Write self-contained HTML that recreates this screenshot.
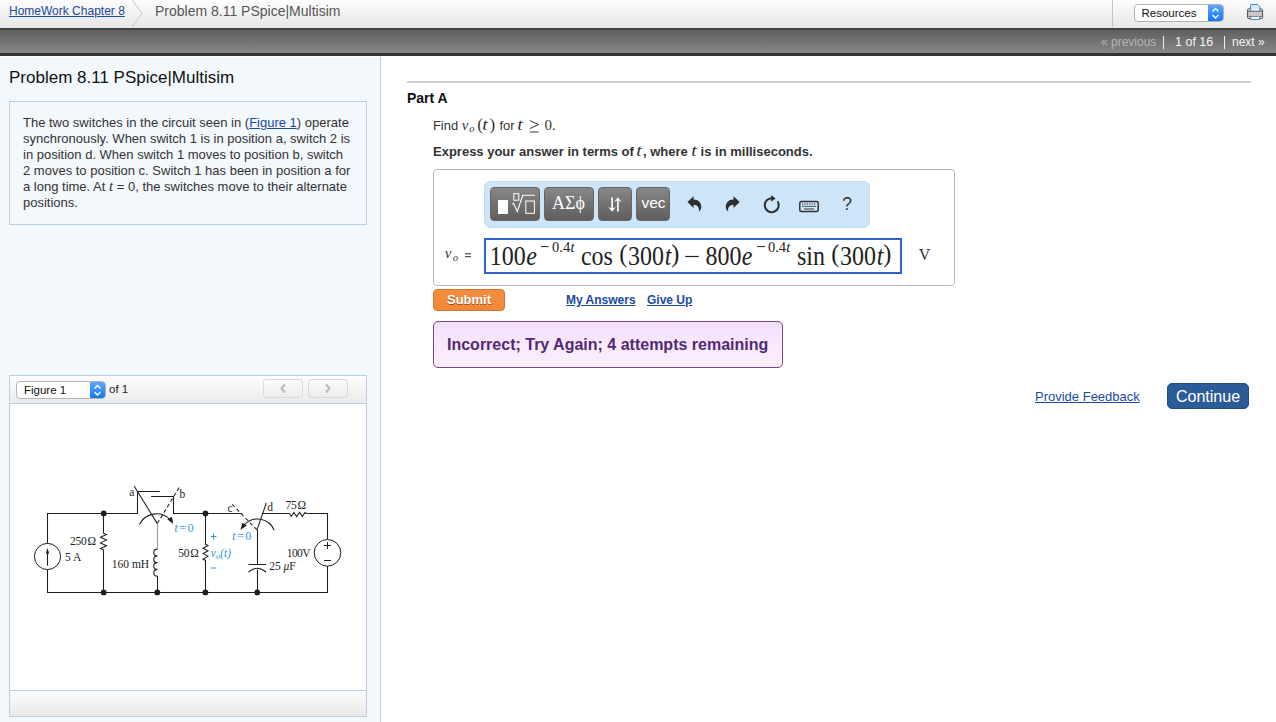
<!DOCTYPE html>
<html><head><meta charset="utf-8">
<style>
*{box-sizing:border-box;margin:0;padding:0}
html,body{width:1276px;height:722px;overflow:hidden;background:#fff;font-family:"Liberation Sans",sans-serif;color:#222;position:relative}
.abs{position:absolute;white-space:nowrap}
#top{left:0;top:0;width:1276px;height:28px;background:linear-gradient(#fdfdfd,#e6e6e6)}
#bar{left:0;top:28px;width:1276px;height:28px;background:linear-gradient(#5f5f5f,#888);border-top:2px solid #424242;border-bottom:3px solid #333}
#left{left:0;top:56px;width:381px;height:666px;background:#f3f8fc;border-right:1px solid #bccfe0;border-top:1px solid #fff}
a{color:#1b4aa0}
.m{font-family:"Liberation Serif",serif}
.mi{font-family:"Liberation Serif",serif;font-style:italic}
.btn{position:absolute;top:187px;height:34px;border-radius:4px;background:linear-gradient(#878787,#5e5e5e);border:1px solid #666;color:#fff}
.sel{position:absolute;border:1px solid #b4b4b4;border-radius:4px;background:#fff;overflow:hidden}
.sel .blu{position:absolute;right:0;top:0;bottom:0;background:linear-gradient(#5aa7fb,#1779f3)}
.nb{position:absolute;top:379px;width:40px;height:19px;border:1px solid #dadada;border-radius:3px;background:linear-gradient(#fbfbfb,#ececec)}
</style></head><body>
<div id="top" class="abs"></div>
<div id="bar" class="abs"></div>
<div id="left" class="abs"></div>

<!-- breadcrumb -->
<div class="abs" style="left:9px;top:4px;font-size:12px"><a href="#">HomeWork Chapter 8</a></div>
<svg class="abs" style="left:130px;top:0" width="16" height="28"><path d="M2 0 L12 13.5 L2 27" fill="none" stroke="#c8c8c8" stroke-width="1"/></svg>
<div class="abs" style="left:155px;top:3px;font-size:14px;color:#555">Problem 8.11 PSpice|Multisim</div>
<div class="abs" style="left:1112px;top:0;width:1px;height:27px;background:#c4c4c4"></div>
<div class="sel" style="left:1134px;top:4px;width:90px;height:18px">
  <div class="abs" style="left:6.5px;top:2px;font-size:11.5px;color:#111">Resources</div>
  <div class="blu" style="width:15px"><svg width="15" height="16" style="position:absolute;left:0;top:0"><path d="M4.5 6.5 L7.5 3.5 L10.5 6.5 M4.5 10 L7.5 13 L10.5 10" fill="none" stroke="#fff" stroke-width="1.4"/></svg></div>
</div>
<svg class="abs" style="left:1240px;top:0" width="30" height="26" viewBox="1240 0 30 26">
  <defs><linearGradient id="pg" x1="0" y1="0" x2="1" y2="1"><stop offset="0" stop-color="#c6dcf3"/><stop offset="1" stop-color="#eef5fc"/></linearGradient>
  <linearGradient id="pb" x1="0" y1="0" x2="0" y2="1"><stop offset="0" stop-color="#f4f4f4"/><stop offset="0.5" stop-color="#c4c4c4"/><stop offset="1" stop-color="#e8e8e8"/></linearGradient></defs>
  <path d="M1247.6 11 Q1247.1 9 1249 8.8 H1261.2 Q1263 9 1262.6 11 V17.5 Q1262.6 18.6 1261.4 18.6 H1248.8 Q1247.6 18.6 1247.6 17.5z" fill="url(#pb)" stroke="#3a3a3a" stroke-width="0.9"/>
  <path d="M1250.6 11.2 V5.4 Q1250.6 4.4 1251.6 4.4 H1257.6 L1259.8 6.6 V11.2" fill="url(#pg)" stroke="#3b86cf" stroke-width="1"/>
  <path d="M1248 11.3 H1262.3 M1248.5 16.4 H1261.8" stroke="#555" stroke-width="0.9" fill="none"/>
  <path d="M1250.6 16.8 V19.4 H1259.8 V16.8" fill="#f4f8fc" stroke="#3b86cf" stroke-width="1"/>
</svg>

<!-- dark bar nav -->
<div class="abs" style="left:1101px;top:35px;font-size:12px;color:#b4b4b4">« previous</div>
<div class="abs" style="left:1163px;top:36px;width:1px;height:13px;background:#eee"></div>
<div class="abs" style="left:1175px;top:35px;font-size:12.5px;color:#f4f4f4">1 of 16</div>
<div class="abs" style="left:1224px;top:36px;width:1px;height:13px;background:#eee"></div>
<div class="abs" style="left:1232px;top:35px;font-size:12px;color:#f4f4f4">next »</div>

<!-- left panel -->
<div class="abs" style="left:9px;top:68px;font-size:17px;color:#111">Problem 8.11 PSpice|Multisim</div>
<div class="abs" style="left:9px;top:101px;width:358px;height:124px;border:1px solid #bccfe0"></div>
<div class="abs" style="left:23px;top:115px;width:328px;font-size:13px;line-height:16px;color:#333;white-space:normal">The two switches in the circuit seen in (<a href="#">Figure 1</a>) operate synchronously. When switch 1 is in position a, switch 2 is in position d. When switch 1 moves to position b, switch 2 moves to position c. Switch 1 has been in position a for a long time. At <span class="mi" style="font-size:15px;line-height:0">t</span> = 0, the switches move to their alternate positions.</div>

<!-- figure panel -->
<div class="abs" style="left:9px;top:375px;width:358px;height:342px;border:1px solid #bccfe0;background:#fff"></div>
<div class="abs" style="left:10px;top:376px;width:356px;height:28px;background:linear-gradient(#fdfdfd,#ebebeb);border-bottom:1px solid #bccfe0"></div>
<div class="abs" style="left:10px;top:690px;width:356px;height:26px;background:linear-gradient(#fdfdfd,#e8e8e8);border-top:1px solid #bccfe0"></div>
<div class="sel" style="left:16px;top:381px;width:90px;height:18px">
  <div class="abs" style="left:7px;top:2px;font-size:11.5px;color:#111">Figure 1</div>
  <div class="blu" style="width:15px"><svg width="15" height="16" style="position:absolute;left:0;top:0"><path d="M4.5 6.5 L7.5 3.5 L10.5 6.5 M4.5 10 L7.5 13 L10.5 10" fill="none" stroke="#fff" stroke-width="1.4"/></svg></div>
</div>
<div class="abs" style="left:109px;top:383px;font-size:11.5px;color:#222">of 1</div>
<div class="nb" style="left:263px"><svg width="38" height="17" style="position:absolute;left:0;top:0"><path d="M21 4.5 L17.5 8.5 L21 12.5" fill="none" stroke="#bdbdbd" stroke-width="2.3"/></svg></div>
<div class="nb" style="left:308px"><svg width="38" height="17" style="position:absolute;left:0;top:0"><path d="M17 4.5 L20.5 8.5 L17 12.5" fill="none" stroke="#bdbdbd" stroke-width="2.3"/></svg></div>

<!-- CIRCUIT -->
<svg class="abs" style="left:10px;top:404px" width="356" height="286" viewBox="10 404 356 286"><g fill="none" stroke="#1e1e1e" stroke-width="1.05">
 <path d="M47.5 543.4 V513.5 H137.5 V491.5 H159.7"/>
 <path d="M47.5 569.6 V592.5 H327.5 V566.1"/>
 <path d="M151.1 496.5 H173.5 V513.5 H242.2"/>
 <path d="M262 513.5 H289.7"/>
 <path d="M306.5 513.5 H327.5 V539.5"/>
 <path d="M103.5 513.5 V533.2 l3 1.38 l-6 2.77 l6 2.77 l-6 2.77 l6 2.77 l-6 2.77 l3 1.38 V592.5"/>
 <path d="M205.5 513.5 V544.1 l2.5 1.36 l-5 2.72 l5 2.72 l-5 2.72 l5 2.72 l-5 2.72 l2.5 1.36 V592.5"/>
 <path d="M289.7 513.5 l1.4 3 l2.8 -4 l2.8 4 l2.8 -4 l2.8 4 l2.8 -4 l1.4 1"/>
 <path d="M47.5 565.7 V551"/>
 <path d="M157.5 576.1 V592.5"/>
 <path d="M157.5 549.1 c-5 0 -5 6.75 0 6.75 c-5 0 -5 6.75 0 6.75 c-5 0 -5 6.75 0 6.75 c-5 0 -5 6.75 0 6.75"/>
 <path d="M134.1 486 L157.3 523.6"/>
 <path d="M157.3 523.6 L179.4 487" stroke-dasharray="3.8 2.6"/>
 <path d="M139.5 524.4 A19 19 0 0 1 170 519.5"/>
 <path d="M257.5 529.9 V564.5 M248.5 564.5 H266 M257.5 569.5 V592.5"/>
 <path d="M248.5 572 Q257.3 564.5 266 572"/>
 <path d="M257 529.9 L266.3 503"/>
 <path d="M257 529.9 L230.8 503" stroke-dasharray="3.8 2.6"/>
 <path d="M274.2 530.4 A18 18 0 0 0 244 525"/>
 <path d="M324 545.5 h7 M327.5 542 v7 M324 560.5 h7" stroke-width="1"/>
</g>
<g fill="none" stroke="#1e1e1e" stroke-width="1">
 <circle cx="47.5" cy="556.5" r="13.1"/>
 <circle cx="327.5" cy="552.8" r="13.3"/>
</g>
<path d="M157.5 523.6 V549.1" stroke="#a0a0a0" stroke-width="1.2" fill="none"/>
<g fill="#1e1e1e">
 <circle cx="103.7" cy="513.4" r="2.9"/><circle cx="103.7" cy="592.4" r="2.9"/>
 <circle cx="205.4" cy="513.4" r="2.9"/><circle cx="205.4" cy="592.4" r="2.9"/>
 <circle cx="157.3" cy="592.4" r="2.9"/><circle cx="257.2" cy="592.4" r="2.9"/>
 <path d="M47.5 547.8 l-1.6 6 h3.2z"/>
 <path d="M173.2 524 L167.3 519.2 L171.9 516.8z"/>
 <path d="M240.4 529.9 L242.5 522.8 L246.8 525.6z"/>
</g>
<g font-family="Liberation Serif" font-size="11.5" fill="#1e1e1e">
 <text x="129.2" y="495.6">a</text>
 <text x="179.6" y="497.6">b</text>
 <text x="227.6" y="511.5">c</text>
 <text x="267.2" y="511.3">d</text>
 <text x="70" y="545" letter-spacing="-0.3">250<tspan dx="1.2">Ω</tspan></text>
 <text x="65" y="561">5 A</text>
 <text x="111.8" y="567.5">160 mH</text>
 <text x="178.2" y="557" letter-spacing="-0.3">50<tspan dx="1.2">Ω</tspan></text>
 <text x="285.5" y="508.6" letter-spacing="-0.3">75<tspan dx="1.2">Ω</tspan></text>
 <text x="286.8" y="556.7" letter-spacing="-0.6">100V</text>
 <text x="269.2" y="570.4">25 <tspan font-style="italic">μ</tspan>F</text>
</g>
<g font-family="Liberation Serif" font-size="11.5" fill="#1f9ad6">
 <text x="174.4" y="532.3"><tspan font-style="italic">t</tspan><tspan dx="1.8">=</tspan><tspan dx="1.8">0</tspan></text>
 <text x="232.3" y="539.5"><tspan font-style="italic">t</tspan><tspan dx="1.8">=</tspan><tspan dx="1.8">0</tspan></text>
 <text x="210.8" y="557" font-style="italic">v<tspan font-size="8.5" dy="1.5">o</tspan><tspan dy="-1.5">(t)</tspan></text>
</g>
<g stroke="#1f9ad6" stroke-width="1" fill="none">
 <path d="M210.9 536.5 h5.5 M213.6 533.8 v5.5 M210.9 568 h5.5"/>
</g>
</svg>

<!-- right content -->
<div class="abs" style="left:407px;top:81px;width:844px;height:2px;background:#cfcfcf"></div>
<div class="abs" style="left:407px;top:90px;font-size:14px;font-weight:bold;color:#111">Part A</div>

<div class="abs" style="left:433px;top:169px;width:522px;height:117px;border:1px solid #b8b8b8;border-radius:4px"></div>
<div class="abs" style="left:484px;top:181px;width:386px;height:47px;background:#cce5f9;border-radius:6px;border:1px solid #c2dcf2"></div>
<div class="btn" style="left:490px;width:50px"></div>
<div class="btn" style="left:544px;width:50px"></div>
<div class="btn" style="left:598px;width:34px"></div>
<div class="btn" style="left:636px;width:34px"></div>

<div class="abs" style="left:484px;top:238px;width:418px;height:36px;border:2px solid #2f63c9;background:#fff"></div>

<div class="abs" style="left:433px;top:289px;width:72px;height:22px;border-radius:4px;background:linear-gradient(#f48d3e,#f1883a);border:1px solid #d8742e"></div>
<div class="abs" style="left:447px;top:292px;font-size:13px;font-weight:bold;color:#fff;text-shadow:0 1px 0 #9a4c18">Submit</div>
<div class="abs" style="left:566px;top:293px;font-size:12px;font-weight:bold"><a href="#">My Answers</a></div>
<div class="abs" style="left:647px;top:293px;font-size:12px;font-weight:bold"><a href="#">Give Up</a></div>

<div class="abs" style="left:433px;top:321px;width:350px;height:47px;border:1px solid #7a4593;border-radius:5px;background:linear-gradient(#f4dffa,#fbf0fd)"></div>
<div class="abs" style="left:447px;top:336px;font-size:16px;font-weight:bold;color:#522a74">Incorrect; Try Again; 4 attempts remaining</div>

<div class="abs" style="left:1035px;top:389px;font-size:13px"><a href="#">Provide Feedback</a></div>
<div class="abs" style="left:1167px;top:383px;width:82px;height:26px;border-radius:5px;background:#2b5c98;border:1px solid #234d80"></div>
<div class="abs" style="left:1176px;top:387.5px;font-size:16px;color:#fff">Continue</div>

<svg class="abs" style="left:0;top:0;pointer-events:none" width="1276" height="722" viewBox="0 0 1276 722">
<!-- Find line -->
<g fill="#333">
 <text x="432.9" y="130.1" font-family="Liberation Sans" font-size="13">Find</text>
 <text x="499.4" y="130.1" font-family="Liberation Sans" font-size="13">for</text>
</g>
<g fill="#333" font-family="Liberation Serif">
 <text x="461.8" y="130.1" font-size="15" font-style="italic">v</text>
 <text x="469.3" y="132" font-size="10.5" font-style="italic">o</text>
 <text x="477.2" y="130.3" font-size="17">(</text>
 <text transform="translate(483 130.1) scale(1.2 1)" x="-0.7" y="0" font-size="16.5" font-style="italic">t</text>
 <text x="489.5" y="130.3" font-size="17">)</text>
 <text transform="translate(518.1 130.1) scale(1.2 1)" x="-0.7" y="0" font-size="16.5" font-style="italic">t</text>
 <text x="544.5" y="130.1" font-size="15">0.</text>
</g>
<path d="M529.8 120.6 L538.6 124.6 L529.8 128.6 M529.8 132 H538.6" fill="none" stroke="#333" stroke-width="1"/>
<!-- Express line -->
<g fill="#333" font-family="Liberation Sans" font-size="13" font-weight="bold">
 <text x="433" y="156">Express your answer in terms of</text>
 <text x="643" y="156">, where</text>
 <text x="700.6" y="156">is in milliseconds.</text>
</g>
<g fill="#333" font-family="Liberation Serif" font-size="15" font-style="italic">
 <text transform="translate(637.2 156) scale(1.2 1)" x="-0.7" y="0" font-size="16.5">t</text>
 <text transform="translate(692.1 156) scale(1.2 1)" x="-0.7" y="0" font-size="16.5">t</text>
</g>
<!-- toolbar icons -->
<g fill="#fff">
 <rect x="498" y="200" width="10" height="14"/>
</g>
<g fill="none" stroke="#fff" stroke-width="1">
 <rect x="513.8" y="193.7" width="5" height="6.5"/>
 <rect x="525.8" y="201" width="8.6" height="12.3"/>
 <path d="M512.2 204.4 L513.6 203.3 L517.3 211.5 L522.8 195.3 H535" stroke-width="1.1"/>
</g>
<text x="552" y="209.1" font-family="Liberation Serif" font-size="18" fill="#fff">ΑΣϕ</text>
<g fill="none" stroke="#fff" stroke-width="1.7">
 <path d="M612.1 197.6 V210"/>
 <path d="M617.9 211.6 V199.5"/>
</g>
<g fill="#fff">
 <path d="M608.4 207 L612.1 211.8 L615.8 207 L612.1 208.6z"/>
 <path d="M614.2 201.9 L617.9 197.2 L621.6 201.9 L617.9 200.3z"/>
</g>
<text x="641.4" y="207.9" font-family="Liberation Sans" font-size="15.5" fill="#fff">vec</text>
<!-- undo / redo -->
<g fill="#2f2f2f">
 <path d="M687.4 202.1 L693.6 196.3 V199.6 C698.6 199.6 701.3 203 701.3 206.7 C701.3 208.8 700.3 210.5 698.8 211.6 C699.8 207.8 697.4 204.8 693.6 204.8 V208z"/>
 <path transform="translate(1427.1 0) scale(-1 1)" d="M687.4 202.1 L693.6 196.3 V199.6 C698.6 199.6 701.3 203 701.3 206.7 C701.3 208.8 700.3 210.5 698.8 211.6 C699.8 207.8 697.4 204.8 693.6 204.8 V208z"/>
</g>
<!-- refresh -->
<path d="M777.6 201.3 A7 7 0 1 1 773 198.3" fill="none" stroke="#2f2f2f" stroke-width="2"/>
<path d="M771.2 195 L775.6 198.6 L771.2 201.8z" fill="#2f2f2f"/>
<!-- keyboard -->
<rect x="799.8" y="201.5" width="18.4" height="10" rx="1.5" fill="none" stroke="#333" stroke-width="1.5"/>
<g fill="#555">
 <rect x="802" y="203.3" width="1.2" height="1.3"/><rect x="804.4" y="203.3" width="1.2" height="1.3"/><rect x="806.8" y="203.3" width="1.2" height="1.3"/><rect x="809.2" y="203.3" width="1.2" height="1.3"/><rect x="811.6" y="203.3" width="1.2" height="1.3"/><rect x="814" y="203.3" width="1.2" height="1.3"/>
 <rect x="802" y="205.8" width="14" height="1"/>
 <rect x="804" y="208.4" width="10" height="1.2"/>
</g>
<text x="842.2" y="210" font-family="Liberation Sans" font-size="17.5" fill="#333">?</text>
<!-- v_o = -->
<g fill="#333" font-family="Liberation Serif" font-style="italic">
 <text x="444.7" y="258.1" font-size="15">v</text>
 <text x="452.7" y="260.6" font-size="10.5">o</text>
</g>
<rect x="465" y="253.2" width="6" height="1.1" fill="#444"/>
<rect x="465" y="256.1" width="6" height="1.1" fill="#444"/>
<!-- expression -->
<g fill="#222" font-family="Liberation Serif" font-size="24" transform="translate(0 264.9) scale(1 1.1) translate(0 -264.9)">
 <text x="489.7" y="264.9">100</text>
 <text x="580.9" y="264.9">cos</text>
 <text x="628.1" y="264.9">300</text>
 <text x="705.4" y="264.9">800</text>
 <text x="797" y="264.9">sin</text>
 <text x="840.1" y="264.9">300</text>
</g>
<g fill="#222" font-family="Liberation Serif" font-size="24" font-style="italic" transform="translate(0 264.9) scale(1 1.1) translate(0 -264.9)">
 <text x="526.2" y="264.9">e</text>
 <text x="664.8" y="264.9">t</text>
 <text x="741.8" y="264.9">e</text>
 <text x="876.8" y="264.9">t</text>
</g>
<g fill="#222" font-family="Liberation Serif" font-size="14.5">
 <text x="552" y="251.8">0.4</text>
 <text x="767.9" y="251.8">0.4</text>
 <text x="570.5" y="251.8" font-style="italic">t</text>
 <text x="786.3" y="251.8" font-style="italic">t</text>
</g>
<g fill="#222" font-family="Liberation Serif" font-size="24.4">
 <text x="619.3" y="261.6" font-size="24.4">(</text>
 <text x="671.2" y="261.6" font-size="24.4">)</text>
 <text x="831.3" y="261.6" font-size="24.4">(</text>
 <text x="883.2" y="261.6" font-size="24.4">)</text>
</g>
<g fill="#222">
 <rect x="685.2" y="255.9" width="13.6" height="1.2"/>
 <rect x="541" y="246.1" width="7.5" height="1"/>
 <rect x="757.1" y="246.1" width="8" height="1"/>
</g>
<text x="918.8" y="260" font-family="Liberation Serif" font-size="16" fill="#333">V</text>
</svg>

</body></html>
